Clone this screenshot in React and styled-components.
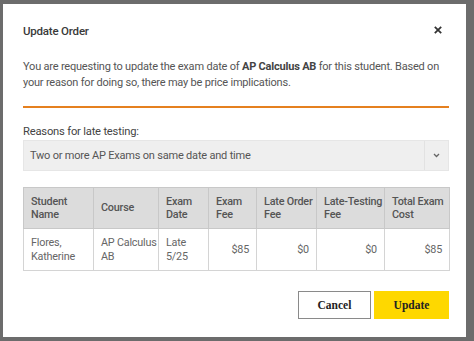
import React from 'react';
import styled, { createGlobalStyle } from 'styled-components';

const GlobalStyle = createGlobalStyle`
    html, body {
        margin: 0;
        padding: 0;
        background: #6e6e6e;
        font-family: Roboto, "Liberation Sans", sans-serif;
    }
`;

const Backdrop = styled.div`
    width: 474px;
    height: 341px;
    padding: 4px 8px 4px 3px;
    box-sizing: border-box;
    background: #6c6c6c;
`;

const Modal = styled.div`
    background: #fff;
    height: 333px;
    box-sizing: border-box;
    padding: 16px 17px 0 20px;
    display: flex;
    flex-direction: column;
    letter-spacing: -0.2px;
`;

const Header = styled.div`
    display: flex;
    justify-content: space-between;
    align-items: center;
    height: 22px;
`;

const Title = styled.h2`
    margin: 0;
    font-size: 11.5px;
    font-weight: 500;
    color: #3a3a3a;
`;

const Close = styled.button`
    border: none;
    background: none;
    padding: 0;
    width: 16px;
    height: 16px;
    display: flex;
    align-items: center;
    justify-content: center;
    margin-right: 3px;
    margin-top: -3px;
    cursor: pointer;
`;

const Intro = styled.p`
    margin: 17px 0 0;
    font-size: 11px;
    line-height: 16px;
    color: #555;

    b {
        font-weight: 700;
        color: #444;
    }
`;

const Divider = styled.hr`
    border: none;
    height: 2px;
    background: #e5801f;
    margin: 15px 0 0;
`;

const Label = styled.label`
    display: block;
    margin-top: 17px;
    font-size: 11.2px;
    line-height: 14px;
    color: #444;
`;

const Select = styled.div`
    margin-top: 1px;
    height: 31px;
    display: flex;
    background: #efefef;
    border: 1px solid #e6e6e6;
    box-sizing: border-box;
`;

const SelectValue = styled.div`
    flex: 1;
    display: flex;
    align-items: center;
    padding-left: 6px;
    font-size: 11px;
    color: #555;
`;

const SelectArrow = styled.div`
    width: 23px;
    border-left: 1px solid #e2e2e2;
    display: flex;
    align-items: center;
    justify-content: center;
`;

const Table = styled.table`
    margin-top: 16px;
    width: 100%;
    table-layout: fixed;
    border-collapse: collapse;
    font-size: 10.8px;
    line-height: 13.5px;
    color: #555;
`;

const Th = styled.th`
    background: #dcdcdc;
    border: 1px solid #c8c8c8;
    font-weight: 500;
    text-align: left;
    vertical-align: middle;
    padding: 0 0 0 7px;
    height: 41px;
    box-sizing: border-box;
    white-space: nowrap;
    color: #555;
    width: ${p => p.$w}px;
`;

const Td = styled.td`
    border: 1px solid #d4d4d4;
    padding: ${p => (p.$num ? '0 7px 0 0' : '0 0 0 7px')};
    height: 42px;
    box-sizing: border-box;
    white-space: nowrap;
    text-align: ${p => (p.$num ? 'right' : 'left')};
    vertical-align: middle;
    color: #666;
`;

const Actions = styled.div`
    display: flex;
    justify-content: flex-end;
    gap: 3px;
    margin-top: 20px;
`;

const Button = styled.button`
    height: 28px;
    width: ${p => p.$w}px;
    font-family: "Liberation Serif", "DejaVu Serif", serif;
    font-weight: 700;
    font-size: 11.5px;
    letter-spacing: 0;
    color: #222;
    cursor: pointer;
    background: ${p => (p.$primary ? '#fed800' : '#fff')};
    border: ${p => (p.$primary ? '1px solid #fed800' : '1px solid #8a8a8a')};
`;

const columns = [
    { lines: ['Student', 'Name'], w: 70 },
    { lines: ['Course'], w: 65 },
    { lines: ['Exam', 'Date'], w: 50 },
    { lines: ['Exam', 'Fee'], w: 48 },
    { lines: ['Late Order', 'Fee'], w: 60 },
    { lines: ['Late-Testing', 'Fee'], w: 68 },
    { lines: ['Total Exam', 'Cost'], w: 65 }
];

const App = () => (
    <>
        <GlobalStyle />
        <Backdrop>
            <Modal>
                <Header>
                    <Title>Update Order</Title>
                    <Close aria-label="Close">
                        <svg width="8" height="8" viewBox="0 0 10 10">
                            <path d="M1 1L9 9M9 1L1 9" stroke="#333" strokeWidth="2.2" />
                        </svg>
                    </Close>
                </Header>
                <Intro>
                    You are requesting to update the exam date of <b>AP Calculus AB</b> for this student. Based on
                    your reason for doing so, there may be price implications.
                </Intro>
                <Divider />
                <Label>Reasons for late testing:</Label>
                <Select>
                    <SelectValue>Two or more AP Exams on same date and time</SelectValue>
                    <SelectArrow>
                        <svg width="7" height="5" viewBox="0 0 7 5">
                            <path d="M1 1L3.5 3.5L6 1" stroke="#666" strokeWidth="1.3" fill="none" />
                        </svg>
                    </SelectArrow>
                </Select>
                <Table>
                    <thead>
                        <tr>
                            {columns.map(c => (
                                <Th key={c.lines.join(' ')} $w={c.w}>
                                    {c.lines[0]}
                                    {c.lines[1] && <><br />{c.lines[1]}</>}
                                </Th>
                            ))}
                        </tr>
                    </thead>
                    <tbody>
                        <tr>
                            <Td>Flores,<br />Katherine</Td>
                            <Td>AP Calculus<br />AB</Td>
                            <Td>Late<br />5/25</Td>
                            <Td $num>$85</Td>
                            <Td $num>$0</Td>
                            <Td $num>$0</Td>
                            <Td $num>$85</Td>
                        </tr>
                    </tbody>
                </Table>
                <Actions>
                    <Button $w={73}>Cancel</Button>
                    <Button $w={75} $primary>Update</Button>
                </Actions>
            </Modal>
        </Backdrop>
    </>
);

export default App;
